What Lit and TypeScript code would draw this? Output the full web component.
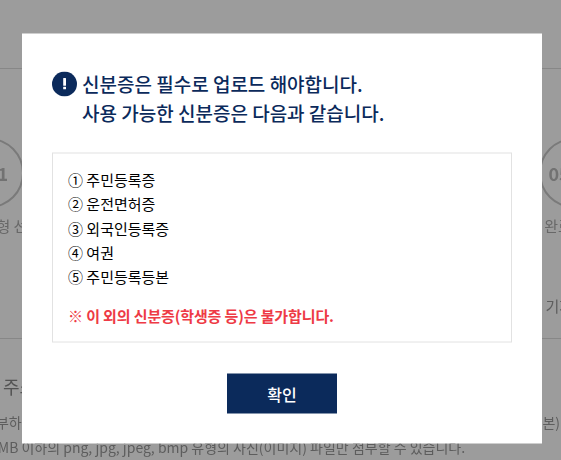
import { LitElement, html, css } from "lit";
import { customElement } from "lit/decorators.js";

@customElement("app-root")
export class AppRoot extends LitElement {
  static styles = css`
    :host {
      display: block;
      width: 561px;
      height: 460px;
      position: relative;
      overflow: hidden;
      background: #fff;
      font-family: "Noto Sans CJK KR", "Noto Sans", sans-serif;
    }
    .page {
      height: 460px;
      overflow: hidden;
      display: flex;
      flex-direction: column;
      filter: blur(0.4px);
    }
    .rule-top {
      margin-top: 68px;
      border-top: 1px solid #ddd;
    }
    .steps {
      display: flex;
      justify-content: space-between;
      margin: 69px -47px 0 -45px;
    }
    .step {
      display: flex;
      flex-direction: column;
      align-items: center;
      width: 69px;
    }
    .circle {
      box-sizing: border-box;
      flex: none;
      width: 69px;
      height: 70px;
      border: 2px solid #c8c8c8;
      border-radius: 50%;
      display: flex;
      align-items: center;
      justify-content: center;
      font-size: 18px;
      font-weight: 700;
      color: #bbb;
    }
    .circle.first {
      padding-left: 16px;
    }
    .circle.last {
      padding-right: 29px;
    }
    .step-label {
      margin-top: 6px;
      font-size: 15px;
      line-height: 24px;
      color: #aaa;
      white-space: nowrap;
    }
    .side {
      margin-top: 56px;
      margin-right: -12px;
      text-align: right;
      font-size: 15px;
      line-height: 24px;
      color: #999;
      white-space: nowrap;
    }
    .rule-bottom {
      margin-top: 20px;
      border-top: 1px solid #ddd;
    }
    .heading {
      margin-top: 35px;
      margin-left: 3px;
      font-size: 18px;
      line-height: 24px;
      color: #888;
    }
    .para {
      margin: 12px 0 0 -17px;
      width: 577px;
      display: flex;
      justify-content: space-between;
      font-size: 14px;
      line-height: 25px;
      color: #999;
      white-space: nowrap;
    }
    .para.next {
      margin-top: 0;
      margin-left: -10px;
    }
    .scrim {
      position: absolute;
      inset: 0;
      background: rgba(0, 0, 0, 0.39);
    }
    .modal {
      position: absolute;
      left: 22px;
      top: 34px;
      transform: translateY(-0.5px);
      box-sizing: border-box;
      width: 520px;
      height: 410px;
      background: #fff;
      padding: 35px 30px 0;
      display: flex;
      flex-direction: column;
    }
    .title {
      display: flex;
      gap: 5px;
      color: #0b2a5b;
      font-size: 19px;
      font-weight: 500;
      line-height: 29px;
    }
    .badge {
      flex: none;
      width: 25px;
      height: 25px;
      margin-top: 3px;
    }
    .box {
      box-sizing: border-box;
      margin-top: 26px;
      height: 190px;
      border: 1px solid #e2e2e2;
      padding: 14px 15px 0;
      font-size: 15px;
      line-height: 24.3px;
      color: #000;
    }
    .box div {
      white-space: nowrap;
    }
    .warn {
      margin-top: 14.5px;
      color: #ee3a45;
      font-weight: 700;
      letter-spacing: -0.13px;
    }
    .actions {
      display: flex;
      justify-content: center;
      margin-top: 31px;
    }
    button {
      width: 110px;
      height: 40px;
      border: 0;
      padding: 0;
      background: #0b2a5b;
      color: #fff;
      font: 500 16px "Noto Sans CJK KR", "Noto Sans", sans-serif;
    }
  `;

  render() {
    return html`
      <div class="page">
        <div class="rule-top"></div>
        <div class="steps">
          <div class="step">
            <div class="circle first">01</div>
            <div class="step-label">신분증 유형 선택</div>
          </div>
          <div class="step">
            <div class="circle last">05</div>
            <div class="step-label">완료 안내</div>
          </div>
        </div>
        <div class="side">기재</div>
        <div class="rule-bottom"></div>
        <div class="heading">주소</div>
        <div class="para"><span>첨부하는 서류</span><span>(주민등록증, 운전면허증, 외국인등록증, 여권, 주민등록등본)</span></div>
        <div class="para next">1MB 이하의 png, jpg, jpeg, bmp 유형의 사진(이미지) 파일만 첨부할 수 있습니다.</div>
      </div>
      <div class="scrim"></div>
      <div class="modal">
        <div class="title">
          <svg class="badge" viewBox="0 0 25 25" aria-hidden="true">
            <circle cx="12.5" cy="12.5" r="12.5" fill="#0b2a5b"></circle>
            <rect x="11.2" y="6.5" width="2.8" height="7.8" rx="0.6" fill="#fff"></rect>
            <rect x="11.2" y="15.2" width="2.8" height="2.6" rx="0.4" fill="#fff"></rect>
          </svg>
          <div>신분증은 필수로 업로드 해야합니다.<br />사용 가능한 신분증은 다음과 같습니다.</div>
        </div>
        <div class="box">
          <div>① 주민등록증</div>
          <div>② 운전면허증</div>
          <div>③ 외국인등록증</div>
          <div>④ 여권</div>
          <div>⑤ 주민등록등본</div>
          <div class="warn">※ 이 외의 신분증(학생증 등)은 불가합니다.</div>
        </div>
        <div class="actions"><button>확인</button></div>
      </div>
    `;
  }
}
